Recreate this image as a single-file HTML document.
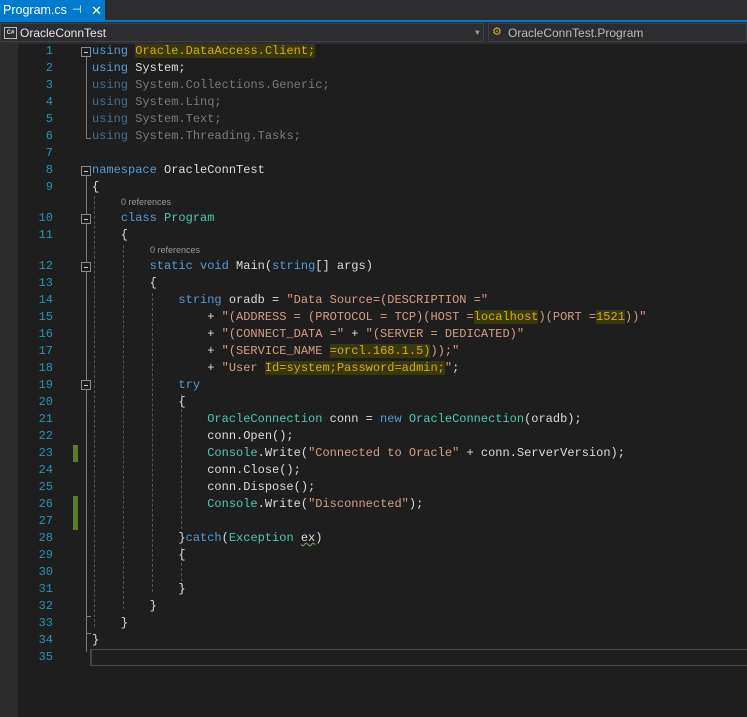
<!DOCTYPE html>
<html><head><meta charset="utf-8"><style>
body{margin:0;width:747px;height:717px;background:#1e1e1e;overflow:hidden;position:relative;font-family:"Liberation Mono",monospace;}
.a{position:absolute;}
.ln{position:absolute;left:20px;width:33px;text-align:right;color:#2b91af;font-size:12px;line-height:17px;font-family:"Liberation Mono",monospace;}
.cl{position:absolute;left:92px;font-size:12px;line-height:17px;white-space:pre;color:#dcdcdc;}
.k{color:#569cd6}.t{color:#4ec9b0}.s{color:#d69d85}.g{color:#7a7a7a}.gk{color:#3f6f96}
.h{background:#38380c;color:#d8b000}
.lens{position:absolute;font-family:"Liberation Sans",sans-serif;font-size:9px;color:#999;}
.fb{position:absolute;left:81px;width:8px;height:8px;border:1px solid #8a8a8a;background:#1e1e1e}
.fb:after{content:"";position:absolute;left:2px;top:3.5px;width:4px;height:1px;background:#ccc}
.gd{position:absolute;width:0;border-left:1px dashed #555}
.ch{position:absolute;left:73px;width:5px;background:#5a7a2c}
</style></head><body>
<div class="a" style="left:0;top:0;width:747px;height:21px;background:#2d2d30"></div>
<div class="a" style="left:0;top:0;width:105px;height:21px;background:#007acc;color:#fff;font-family:'Liberation Sans',sans-serif;font-size:12.5px;line-height:21px;"><span style="margin-left:3px">Program.cs</span><span style="position:absolute;left:72px;font-size:11px">⊣</span><span style="position:absolute;left:91px;font-size:13px">✕</span></div>
<div class="a" style="left:0;top:20px;width:747px;height:2px;background:#007acc"></div>
<div class="a" style="left:0;top:22px;width:747px;height:22px;background:#2d2d30"></div>
<div class="a" style="left:0;top:23px;width:484px;height:19px;border:1px solid #3f3f46;box-sizing:border-box"></div>
<div class="a" style="left:488px;top:23px;width:259px;height:19px;border:1px solid #3f3f46;box-sizing:border-box"></div>
<div class="a" style="left:4px;top:27px;width:11px;height:10px;border:1px solid #bbb;color:#ddd;font-size:6px;line-height:10px;font-family:'Liberation Sans',sans-serif;font-weight:bold;text-align:center">C#</div>
<div class="a" style="left:20px;top:24px;color:#e6e6e6;font-family:'Liberation Sans',sans-serif;font-size:12px;line-height:19px">OracleConnTest</div>
<div class="a" style="left:475px;top:25px;color:#999;font-size:8px;line-height:17px">▼</div>
<div class="a" style="left:492px;top:25px;color:#d9a63a;font-size:11px;line-height:17px">⚙</div>
<div class="a" style="left:508px;top:24px;color:#bbb;font-family:'Liberation Sans',sans-serif;font-size:12px;line-height:19px">OracleConnTest.Program</div>
<div class="a" style="left:0;top:44px;width:18px;height:673px;background:#2b2b2b"></div>

<div class="a" style="left:86px;top:57px;height:82px;border-left:1px solid #7a7a7a"></div>
<div class="a" style="left:86px;top:138px;width:5px;border-top:1px solid #7a7a7a"></div>
<div class="a" style="left:86px;top:176px;height:476px;border-left:1px solid #7a7a7a"></div>
<div class="a" style="left:86px;top:616px;width:5px;border-top:1px solid #7a7a7a"></div>
<div class="a" style="left:86px;top:633px;width:5px;border-top:1px solid #7a7a7a"></div>
<div class="gd" style="left:94px;top:196px;height:431px"></div>
<div class="gd" style="left:123px;top:245px;height:364px"></div>
<div class="gd" style="left:152px;top:293px;height:299px"></div>
<div class="gd" style="left:181px;top:394px;height:135px"></div>
<div class="gd" style="left:181px;top:547px;height:45px"></div>
<div class="fb" style="top:47px"></div><div class="fb" style="top:166px"></div><div class="fb" style="top:214px"></div><div class="fb" style="top:262px"></div><div class="fb" style="top:380px"></div>
<div class="ch" style="top:445px;height:17px"></div><div class="ch" style="top:496px;height:34px"></div>
<div class="a" style="left:90px;top:649px;width:660px;height:15px;border:1px solid #464646;border-right:none;box-shadow:inset 1px 0 #464646"></div>

<div class="lens" style="left:121px;top:197px">0 references</div>
<div class="lens" style="left:150px;top:245px">0 references</div>

<div class="ln" style="top:43px">1</div><div class="cl" style="top:43px"><span class="k">using</span> <span class="h">Oracle.DataAccess.Client;</span></div>
<div class="ln" style="top:60px">2</div><div class="cl" style="top:60px"><span class="k">using</span> System;</div>
<div class="ln" style="top:77px">3</div><div class="cl" style="top:77px"><span class="gk">using</span> <span class="g">System.Collections.Generic;</span></div>
<div class="ln" style="top:94px">4</div><div class="cl" style="top:94px"><span class="gk">using</span> <span class="g">System.Linq;</span></div>
<div class="ln" style="top:111px">5</div><div class="cl" style="top:111px"><span class="gk">using</span> <span class="g">System.Text;</span></div>
<div class="ln" style="top:128px">6</div><div class="cl" style="top:128px"><span class="gk">using</span> <span class="g">System.Threading.Tasks;</span></div>
<div class="ln" style="top:145px">7</div>
<div class="ln" style="top:162px">8</div><div class="cl" style="top:162px"><span class="k">namespace</span> OracleConnTest</div>
<div class="ln" style="top:179px">9</div><div class="cl" style="top:179px">{</div>
<div class="ln" style="top:210px">10</div><div class="cl" style="top:210px">    <span class="k">class</span> <span class="t">Program</span></div>
<div class="ln" style="top:227px">11</div><div class="cl" style="top:227px">    {</div>
<div class="ln" style="top:258px">12</div><div class="cl" style="top:258px">        <span class="k">static</span> <span class="k">void</span> Main(<span class="k">string</span>[] args)</div>
<div class="ln" style="top:275px">13</div><div class="cl" style="top:275px">        {</div>
<div class="ln" style="top:292px">14</div><div class="cl" style="top:292px">            <span class="k">string</span> oradb = <span class="s">"Data Source=(DESCRIPTION ="</span></div>
<div class="ln" style="top:309px">15</div><div class="cl" style="top:309px">                + <span class="s">"(ADDRESS = (PROTOCOL = TCP)(HOST =</span><span class="h">localhost</span><span class="s">)(PORT =</span><span class="h">1521</span><span class="s">))"</span></div>
<div class="ln" style="top:326px">16</div><div class="cl" style="top:326px">                + <span class="s">"(CONNECT_DATA ="</span> + <span class="s">"(SERVER = DEDICATED)"</span></div>
<div class="ln" style="top:343px">17</div><div class="cl" style="top:343px">                + <span class="s">"(SERVICE_NAME </span><span class="h">=orcl.168.1.5)</span><span class="s">));"</span></div>
<div class="ln" style="top:360px">18</div><div class="cl" style="top:360px">                + <span class="s">"User </span><span class="h">Id=system;Password=admin;</span><span class="s">"</span>;</div>
<div class="ln" style="top:377px">19</div><div class="cl" style="top:377px">            <span class="k">try</span></div>
<div class="ln" style="top:394px">20</div><div class="cl" style="top:394px">            {</div>
<div class="ln" style="top:411px">21</div><div class="cl" style="top:411px">                <span class="t">OracleConnection</span> conn = <span class="k">new</span> <span class="t">OracleConnection</span>(oradb);</div>
<div class="ln" style="top:428px">22</div><div class="cl" style="top:428px">                conn.Open();</div>
<div class="ln" style="top:445px">23</div><div class="cl" style="top:445px">                <span class="t">Console</span>.Write(<span class="s">"Connected to Oracle"</span> + conn.ServerVersion);</div>
<div class="ln" style="top:462px">24</div><div class="cl" style="top:462px">                conn.Close();</div>
<div class="ln" style="top:479px">25</div><div class="cl" style="top:479px">                conn.Dispose();</div>
<div class="ln" style="top:496px">26</div><div class="cl" style="top:496px">                <span class="t">Console</span>.Write(<span class="s">"Disconnected"</span>);</div>
<div class="ln" style="top:513px">27</div>
<div class="ln" style="top:530px">28</div><div class="cl" style="top:530px">            }<span class="k">catch</span>(<span class="t">Exception</span> <span style="text-decoration:underline wavy #6a9955">ex</span>)</div>
<div class="ln" style="top:547px">29</div><div class="cl" style="top:547px">            {</div>
<div class="ln" style="top:564px">30</div>
<div class="ln" style="top:581px">31</div><div class="cl" style="top:581px">            }</div>
<div class="ln" style="top:598px">32</div><div class="cl" style="top:598px">        }</div>
<div class="ln" style="top:615px">33</div><div class="cl" style="top:615px">    }</div>
<div class="ln" style="top:632px">34</div><div class="cl" style="top:632px">}</div>
<div class="ln" style="top:649px">35</div>
</body></html>
